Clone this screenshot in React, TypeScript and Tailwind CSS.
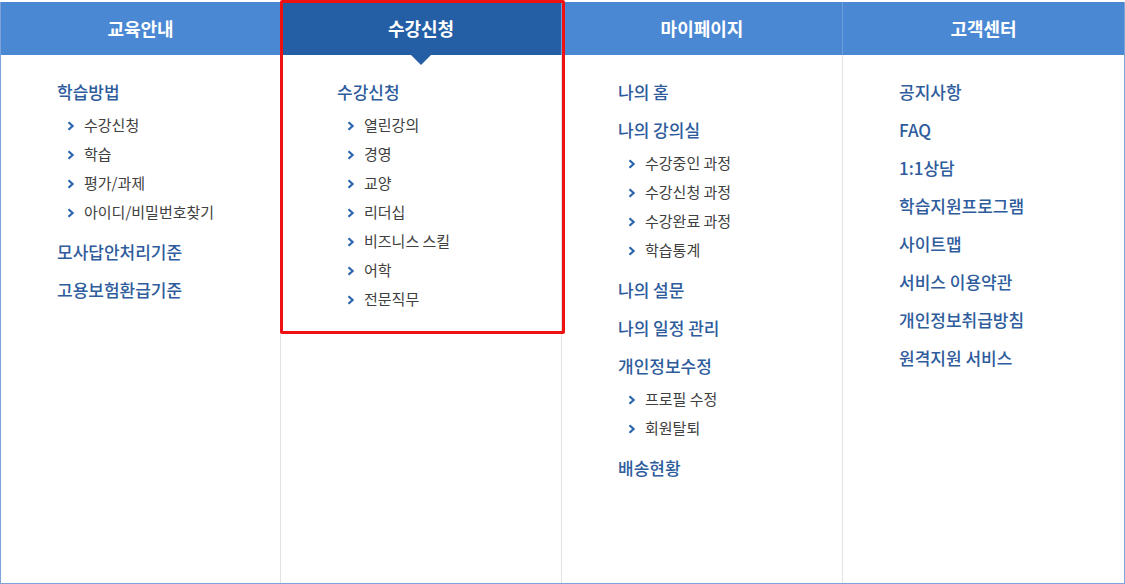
import React from "react";

type Sub = string[];
type Entry = { title: string; subs?: Sub };
type Column = { label: string; active?: boolean; entries: Entry[] };

const columns: Column[] = [
  {
    label: "교육안내",
    entries: [
      { title: "학습방법", subs: ["수강신청", "학습", "평가/과제", "아이디/비밀번호찾기"] },
      { title: "모사답안처리기준" },
      { title: "고용보험환급기준" },
    ],
  },
  {
    label: "수강신청",
    active: true,
    entries: [
      { title: "수강신청", subs: ["열린강의", "경영", "교양", "리더십", "비즈니스 스킬", "어학", "전문직무"] },
    ],
  },
  {
    label: "마이페이지",
    entries: [
      { title: "나의 홈" },
      { title: "나의 강의실", subs: ["수강중인 과정", "수강신청 과정", "수강완료 과정", "학습통계"] },
      { title: "나의 설문" },
      { title: "나의 일정 관리" },
      { title: "개인정보수정", subs: ["프로필 수정", "회원탈퇴"] },
      { title: "배송현황" },
    ],
  },
  {
    label: "고객센터",
    entries: [
      { title: "공지사항" },
      { title: "FAQ" },
      { title: "1:1상담" },
      { title: "학습지원프로그램" },
      { title: "사이트맵" },
      { title: "서비스 이용약관" },
      { title: "개인정보취급방침" },
      { title: "원격지원 서비스" },
    ],
  },
];

const Chevron = () => (
  <svg width="8" height="10" viewBox="0 0 8 10" className="mr-[9px] shrink-0">
    <path d="M1.5 1.2 L5.6 5 L1.5 8.8" fill="none" stroke="#2b65ad" strokeWidth="2.2" />
  </svg>
);

export default function App() {
  return (
    <div
      className="relative w-[1125px] h-[584px] bg-white pt-[2px]"
      style={{ fontFamily: '"Noto Sans CJK KR", "Noto Sans", sans-serif' }}
    >
      <div className="flex h-[582px] flex-col border-x border-b border-[#7ea3d9]">
        {/* header bar */}
        <div className="grid h-[53px] grid-cols-[279px_281px_281px_1fr] bg-[#4a88d3]">
          {columns.map((c, i) => (
            <div
              key={c.label}
              className={`relative flex items-center justify-center text-[18px] font-bold text-white ${
                c.active ? "bg-[#245fa6]" : ""
              } ${i > 0 ? "border-l border-[#6d9fdd]" : ""}`}
            >
              {c.label}
              {c.active && (
                <span className="absolute left-1/2 top-full -translate-x-1/2 border-x-[10px] border-t-[10px] border-x-transparent border-t-[#245fa6]" />
              )}
            </div>
          ))}
        </div>

        {/* body */}
        <div className="grid flex-1 grid-cols-[279px_281px_281px_1fr]">
          {columns.map((c, i) => (
            <div
              key={c.label}
              className={`pt-[18px] ${i > 0 ? "border-l border-[#e2e2e2] pl-[56px]" : "pl-[56px]"}`}
            >
              {c.entries.map((e) => (
                <div key={e.title} className={e.subs ? "mb-[6px]" : ""}>
                  <div className="flex h-[38px] items-center text-[17px] font-medium text-[#2e5c9c]">
                    {e.title}
                  </div>
                  {e.subs && (
                    <ul>
                      {e.subs.map((s) => (
                        <li
                          key={s}
                          className="flex h-[29px] items-center pl-[10px] text-[15px] text-[#404040]"
                        >
                          <Chevron />
                          {s}
                        </li>
                      ))}
                    </ul>
                  )}
                </div>
              ))}
            </div>
          ))}
        </div>
      </div>

      {/* red highlight annotation */}
      <div className="pointer-events-none absolute left-[280px] top-0 h-[334px] w-[285px] rounded-[2px] border-[3px] border-[#ee1111]" />
    </div>
  );
}
